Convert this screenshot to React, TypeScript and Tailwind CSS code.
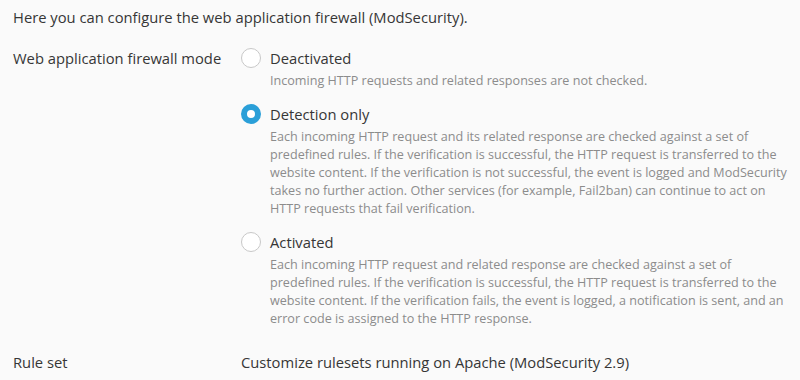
import React, { useState } from 'react';

const modes = [
    {
        id: 'off',
        label: 'Deactivated',
        text: 'Incoming HTTP requests and related responses are not checked.',
    },
    {
        id: 'detect',
        label: 'Detection only',
        text: 'Each incoming HTTP request and its related response are checked against a set of predefined rules. If the verification is successful, the HTTP request is transferred to the website content. If the verification is not successful, the event is logged and ModSecurity takes no further action. Other services (for example, Fail2ban) can continue to act on HTTP requests that fail verification.',
    },
    {
        id: 'on',
        label: 'Activated',
        text: 'Each incoming HTTP request and related response are checked against a set of predefined rules. If the verification is successful, the HTTP request is transferred to the website content. If the verification fails, the event is logged, a notification is sent, and an error code is assigned to the HTTP response.',
    },
];

const App = () => {
    const [mode, setMode] = useState('detect');

    return (
        <div className="w-[800px] h-[380px] bg-[#fafafa] text-[#363636] font-['Open_Sans',sans-serif] pl-[13px] pr-[4px] pt-[6px] overflow-hidden">
            <p className="text-[14.75px] leading-[22px]">Here you can configure the web application firewall (ModSecurity).</p>

            <div className="grid grid-cols-[228px_1fr] mt-[19px]">
                <div className="text-[14.75px] leading-[22px]">Web application firewall mode</div>
                <div className="flex flex-col gap-[13px]">
                    {modes.map(m => (
                        <label key={m.id} className="flex gap-[9px] cursor-pointer" onClick={() => setMode(m.id)}>
                            <span
                                className={`w-[20px] h-[20px] shrink-0 rounded-full mt-[1px] ${mode === m.id ? 'border-[6px] border-[#2a9fd8] bg-white' : 'border border-[#c8c8c8] bg-white'}`}
                            />
                            <div>
                                <div className="text-[14.75px] leading-[22px]">{m.label}</div>
                                <div className="text-[12.6px] leading-[18px] text-[#8c8c8c] mt-[3px]">{m.text}</div>
                            </div>
                        </label>
                    ))}
                </div>
            </div>

            <div className="grid grid-cols-[228px_1fr] mt-[23px] text-[14.75px] leading-[22px]">
                <div>Rule set</div>
                <div>Customize rulesets running on Apache (ModSecurity 2.9)</div>
            </div>
        </div>
    );
};

export default App;
